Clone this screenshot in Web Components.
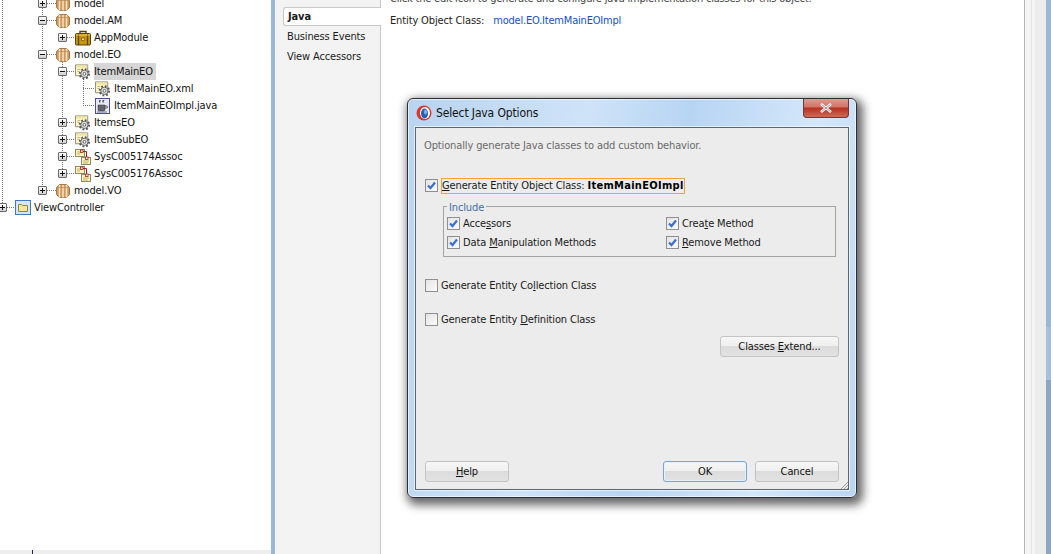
<!DOCTYPE html>
<html><head><meta charset="utf-8"><title>Select Java Options</title>
<style>
html,body{margin:0;height:100%;overflow:hidden;background:#fff;font:11px "DejaVu Sans Condensed","DejaVu Sans",sans-serif;font-stretch:condensed;letter-spacing:-.13px;color:#111}
</style></head><body>
<ide-app>
  <tree-pane slot="tree">
    <tree-row x="42" exp="plus" icon="pkg">model</tree-row>
    <tree-row x="42" exp="minus" icon="pkg">model.AM</tree-row>
    <tree-row x="62" exp="plus" icon="case">AppModule</tree-row>
    <tree-row x="42" exp="minus" icon="pkg">model.EO</tree-row>
    <tree-row x="62" exp="minus" icon="eo" sel>ItemMainEO</tree-row>
    <tree-row x="83" icon="eo">ItemMainEO.xml</tree-row>
    <tree-row x="83" icon="java">ItemMainEOImpl.java</tree-row>
    <tree-row x="62" exp="plus" icon="eo">ItemsEO</tree-row>
    <tree-row x="62" exp="plus" icon="eo">ItemSubEO</tree-row>
    <tree-row x="62" exp="plus" icon="assoc">SysC005174Assoc</tree-row>
    <tree-row x="62" exp="plus" icon="assoc">SysC005176Assoc</tree-row>
    <tree-row x="42" exp="plus" icon="pkg">model.VO</tree-row>
    <tree-row x="2" exp="plus" icon="folder">ViewController</tree-row>
  </tree-pane>
  <side-nav slot="nav">
    <nav-item selected>Java</nav-item>
    <nav-item>Business Events</nav-item>
    <nav-item>View Accessors</nav-item>
  </side-nav>
  <editor-pane slot="editor"></editor-pane>
  <java-dialog slot="dialog"></java-dialog>
</ide-app>
<script>
function def(name, css, html){
  customElements.define(name, class extends HTMLElement{
    connectedCallback(){
      if(this.shadowRoot) return;
      const r=this.attachShadow({mode:'open'});
      r.innerHTML='<style>'+css+'</style>'+(typeof html==='function'?html(this):html);
    }
  });
}
const gear=`<g transform="translate(10 11)"><circle r="5" fill="none" stroke="#555" stroke-width="2" stroke-dasharray="1.900 2"/><circle r="3.900" fill="#dedede" stroke="#555" stroke-width=".9"/><circle r="1.500" fill="#fff" stroke="#444" stroke-width=".8"/></g>`;
const ICONS={
 pkg:`<svg viewBox="0 0 14 14" width="14" height="14"><path d="M.5 3.500 3.500.5h7l3 3v7l-3 3h-7l-3-3z" fill="#d0995c" stroke="#a87a45"/><path d="M3.500 1v12.500M7 1v12.500M10.500 1v12.500" stroke="#f8e4c6" stroke-width="1.500"/><path d="M1 3.500h12" stroke="#b88a55" stroke-width=".7"/></svg>`,
 case:`<svg viewBox="0 0 16 16" width="16" height="16"><path d="M5 4V1.500h6V4" fill="none" stroke="#5b4208" stroke-width="1.400"/><rect x=".5" y="3.500" width="15" height="11.500" rx="1" fill="#c8960f" stroke="#5b4208"/><path d="M3.500 4v11M12.500 4v11" stroke="#5b4208" stroke-width="1.300"/><path d="M1 5h14" stroke="#eccb5a"/><rect x="6.500" y="8" width="3" height="2.500" fill="#f3dc7a" stroke="#5b4208" stroke-width=".6"/></svg>`,
 eo:`<svg viewBox="0 0 17 17" width="17" height="17"><path d="M.5 1.500h13V13H.5z" fill="#fdf7c8" stroke="#85857a"/><path d="M1 2h12v2.500H1z" fill="#f2e6a0"/><path d="M2.500 6.500h3M2.500 8.500h2" stroke="#a89f60" stroke-width=".8"/>${gear}</svg>`,
 java:`<svg viewBox="0 0 16 16" width="16" height="16"><rect x=".5" y=".5" width="14" height="15" fill="#e9e9f6" stroke="#4a4f93"/><path d="M4 2.500h1.500L4 4h1.500M7.500 2.500H9L7.500 4H9" fill="none" stroke="#222" stroke-width=".7"/><path d="M3 7h7v4.500q0 1.500-1.500 1.500h-4Q3 13 3 11.500z" fill="#66666e" stroke="#333" stroke-width=".5"/><path d="M10 8h1.500q1 0 1 1t-1 1H10" fill="none" stroke="#444" stroke-width=".9"/><path d="M2 14h10" stroke="#77779a"/></svg>`,
 assoc:`<svg viewBox="0 0 16 16" width="16" height="16"><rect x=".5" y=".5" width="9" height="7" fill="#fdf6b8" stroke="#8a8a6a"/><path d="M2 3h5M2 5h3" stroke="#a89f60" stroke-width=".8"/><rect x="6.500" y="8.500" width="9" height="7" fill="#fdf6b8" stroke="#8a8a6a"/><path d="M8 12h6M8 14h5" stroke="#a89f60" stroke-width=".8"/><path d="M7 2.500h4.500V9" fill="none" stroke="#b01818" stroke-width="1"/><rect x="5.500" y="1" width="2.500" height="2.500" fill="#fff" stroke="#b01818" stroke-width=".8"/><rect x="10.500" y="8" width="2.500" height="2.500" fill="#fff" stroke="#b01818" stroke-width=".8"/></svg>`,
 folder:`<svg viewBox="0 0 16 16" width="16" height="16"><rect x=".5" y=".5" width="15" height="14" fill="#d3e6fa" stroke="#3f78c8"/><path d="M3.500 4.500h3l1 1h5v6h-9z" fill="#f4e69a" stroke="#8a7a30" stroke-width=".9"/></svg>`
};
def('ide-app',`:host{display:grid;grid-template-columns:271px 4px 106px 1fr;width:1054px;height:554px;position:relative;overflow:hidden}
.split{background:#9cb7d6}
::slotted([slot=dialog]){position:absolute;left:407px;top:98px}`,
`<slot name="tree"></slot><div class="split"></div><slot name="nav"></slot><slot name="editor"></slot><slot name="dialog"></slot>`);

def('tree-pane',`:host{display:block;position:relative;overflow:hidden;background:#fff;height:554px}
svg.lines{position:absolute;left:0;top:0}
.rows{position:relative;margin-top:-5px}
.foot{position:absolute;left:0;right:0;bottom:0;height:4px;background:#eeeeee}
.foot i{position:absolute;left:32px;top:0;width:1px;height:4px;background:#225}`,
`<svg class="lines" width="271" height="220"><g stroke="#777" stroke-dasharray="1 1" fill="none" shape-rendering="crispEdges">
<path d="M2.500 0V207M42.500 0V190M62.500 54V173M83.500 71V105"/>
<path d="M47 3.500H56M47 20.500H56M67 37.500H75M47 54.500H56M67 71.500H75M83 88.500H95M83 105.500H95M67 122.500H75M67 139.500H75M67 156.500H75M67 173.500H75M47 190.500H56M7 207.500H15"/></g></svg>
<div class="rows"><slot></slot></div><div class="foot"><i></i></div>`);

def('tree-row',`:host{display:flex;align-items:center;height:17px;position:relative;white-space:nowrap;color:#111}
.exp{position:absolute;top:4px;width:9px;height:9px;box-sizing:border-box;border:1px solid #6b6b6b;border-radius:1px;background:linear-gradient(#fff,#cfcfcf)}
.exp:before{content:"";position:absolute;left:1px;right:1px;top:3px;height:1px;background:#111}
.exp.plus:after{content:"";position:absolute;top:1px;bottom:1px;left:3px;width:1px;background:#111}
.ic{display:flex;flex:none;margin-right:3px;width:16px}
.ic.small{width:14px;margin-right:4px}
.lbl{padding:0 3px 0 0;line-height:17px}
:host([sel]) .lbl{background:#d6d6d6}`,
t=>{const x=+t.getAttribute('x'),e=t.getAttribute('exp'),ic=t.getAttribute('icon');
 const pad=x+(x===83?12:(x===42?14:13));
 return `<style>:host{padding-left:${pad}px}</style>`+(e?`<span class="exp ${e}" style="left:${x-4}px"></span>`:'')+`<span class="ic ${ic==='pkg'?'small':''}">${ICONS[ic]}</span><span class="lbl"><slot></slot></span>`});

def('side-nav',`:host{display:block;background:#f3f3f3;border-right:1px solid #c9c9c9;box-sizing:border-box;padding-top:7px;padding-left:8px;height:554px}`,`<slot></slot>`);
def('nav-item',`:host{display:block;height:20px;line-height:20px;padding-left:4px;box-sizing:border-box;color:#1a1a1a}
:host([selected]){font-weight:700;height:19px;line-height:18px;background:#fff;border:1px solid #c8c8c8;border-right:0;border-radius:3px 0 0 3px;margin-bottom:1px;margin-right:-1px}`,`<slot></slot>`);

def('editor-pane',`:host{display:grid;grid-template-columns:1fr 1px 6px 1px 3px 11px 5px 3px;height:554px;overflow:hidden}
.main{padding:0 0 0 9px;background:#fff}
.cut{margin-top:-8px;height:14px;line-height:14px;color:#444;white-space:nowrap;letter-spacing:-.21px}
.row{display:flex;margin-top:8px;line-height:14px;color:#222}
.row a{margin-left:9px;color:#1450c4;letter-spacing:-.2px}
.a{background:#b5b5b5}.b{background:#f4f4f4}.c{background:#ececec}.d{background:#fff}
.e{background:linear-gradient(#9cb7d6 0 327px,#a6bfdc 327px 380px,#8da6c2 380px)}`,
`<div class="main"><div class="cut">Click the edit icon to generate and configure java implementation classes for this object.</div>
<div class="row"><span>Entity Object Class:</span><a>model.EO.ItemMainEOImpl</a></div></div>
<div class="a"></div><div class="b"></div><div class="d" style="background:#e4e4e4"></div><div class="b"></div><div class="c"></div><div class="e" style="width:5px"></div><div class="d"></div>`);

def('dlg-check',`:host{display:flex;align-items:center;height:15px;white-space:nowrap;gap:3px;color:#1a1a1a}
.box{width:13px;height:13px;box-sizing:border-box;border:1px solid #8e8f8f;background:linear-gradient(135deg,#e4e4e4,#fafafa);display:flex;flex:none}
.txt{padding:0;height:15px;line-height:15px;box-sizing:border-box}
:host([focus]) .txt{border:1px solid #f0a630;line-height:14px;height:16px}`,
t=>`<span class="box">${t.hasAttribute('checked')?'<svg viewBox="0 0 11 11" width="11" height="11"><path d="M2 5.500 4.500 8 9 2.500" fill="none" stroke="#3c6fd0" stroke-width="2.200"/></svg>':''}</span><span class="txt"><slot></slot></span>`);

def('dlg-button',`:host{display:block;box-sizing:border-box;height:21px;line-height:19px;text-align:center;border:1px solid #c4c4c4;border-radius:3px;color:#111;background:linear-gradient(#f6f6f6 0,#f0f0f0 45%,#dcdcdc 50%,#e2e2e2 100%)}
:host([def]){border-color:#7da2ce;box-shadow:inset 0 0 0 1px #e8f1fb}`,`<slot></slot>`);

def('group-box',`:host{display:grid;grid-template-columns:219px 1fr;grid-auto-rows:19px;position:relative;box-sizing:border-box;height:51px;border:1px solid #a3a3a3;padding:9px 3px 0}
.lg{position:absolute;left:3px;top:-6px;background:#ececec;padding:0 2px;color:#3f6fa6;line-height:14px}`,`<span class="lg">Include</span><slot></slot>`);

def('java-dialog',`:host{display:flex;flex-direction:column;box-sizing:border-box;width:450px;height:400px;border:1px solid #2b2f33;border-radius:6px;
 background:linear-gradient(100deg,#b8d4f0 0,#cfe3f8 35%,#b7d5f3 55%,#d5e7fa 80%,#b9d6f3 100%);box-shadow:inset 0 0 0 1px rgba(255,255,255,.6),3px 4px 10px 3px rgba(0,0,0,.6);padding:0 7px 7px 7px}
.tb{display:flex;align-items:center;height:28px;flex:none;gap:4px;padding-left:1px;color:#111;font-size:12px;position:relative}
.x{position:absolute;right:0;top:0;width:46px;height:19px;box-sizing:border-box;border:1px solid #6a3a3a;border-top:0;border-radius:0 0 4px 4px;background:linear-gradient(#e39a90 0,#d07466 45%,#b73020 50%,#cf6a54 100%);display:flex;align-items:center;justify-content:center}
.panel{flex:1;box-sizing:border-box;background:#ececec;border:1px solid #5a6670;padding:11px 9px 7px 9px;display:flex;flex-direction:column;position:relative;box-shadow:0 0 0 1px rgba(255,255,255,.6)}
.hint{color:#6a6a6a;line-height:14px;height:14px;margin-left:-1px}
.g1{margin-top:25px}
b{letter-spacing:.3px;color:#000}
group-box{margin:13px 3px 0 18px}
.c2{margin-top:21px}.c3{margin-top:19px}
.ext{display:flex;justify-content:flex-end;margin-top:9px}
.ext dlg-button{width:119px}
.foot{margin-top:auto;display:flex;gap:8px}
.foot dlg-button{width:84px}
.foot .help{margin-right:auto}
.grip{position:absolute;right:-1px;bottom:-1px}`,
`<div class="tb"><svg viewBox="0 0 16 16" width="16" height="16"><circle cx="8" cy="8" r="7.500" fill="#d9372a"/><ellipse cx="9" cy="8" rx="5" ry="6" fill="#fff"/><ellipse cx="8.500" cy="8.500" rx="3.500" ry="5" fill="#1f62b8"/><ellipse cx="9.500" cy="7" rx="1.500" ry="2.500" fill="#7fb3ea"/></svg><span>Select Java Options</span>
<div class="x"><svg viewBox="0 0 14 10" width="14" height="10"><path d="M2 1l10 8M12 1 2 9" stroke="#fff" stroke-width="2.600"/><path d="M2.500 1.500l9 7M11.500 1.500l-9 7" stroke="#6b6b6b" stroke-width=".7"/></svg></div></div>
<div class="panel">
<div class="hint">Optionally generate Java classes to add custom behavior.</div>
<dlg-check class="g1" checked focus><span><u>G</u>enerate Entity Object Class: <b>ItemMainEOImpl</b></span></dlg-check>
<group-box>
 <dlg-check checked><span>Acce<u>s</u>sors</span></dlg-check>
 <dlg-check checked><span>Crea<u>t</u>e Method</span></dlg-check>
 <dlg-check checked><span>Data <u>M</u>anipulation Methods</span></dlg-check>
 <dlg-check checked><span><u>R</u>emove Method</span></dlg-check>
</group-box>
<dlg-check class="c2"><span>Generate Entity Co<u>l</u>lection Class</span></dlg-check>
<dlg-check class="c3"><span>Generate Entity <u>D</u>efinition Class</span></dlg-check>
<div class="ext"><dlg-button><span>Classes <u>E</u>xtend...</span></dlg-button></div>
<div class="foot"><dlg-button class="help"><span><u>H</u>elp</span></dlg-button><dlg-button def>OK</dlg-button><dlg-button>Cancel</dlg-button></div>
<svg class="grip" width="10" height="10" viewBox="0 0 10 10"><path d="M9 2 2 9M9 5 5 9M9 8 8 9" stroke="#9a9a9a" stroke-width="1"/></svg>
</div>`);
</script>
</body></html>
